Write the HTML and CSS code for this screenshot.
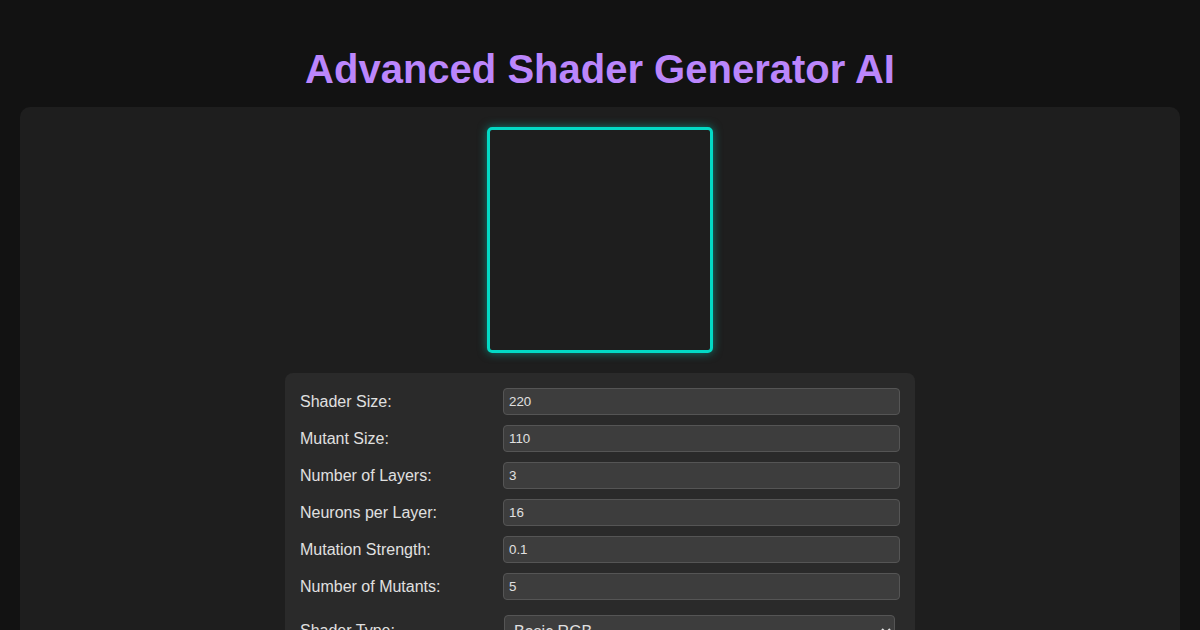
FILE: index.html
```html
<!DOCTYPE html>
<html>
<head>
<meta charset="utf-8">
<link rel="stylesheet" href="styles.css">
</head>
<body>
<h1 class="title">Advanced Shader Generator AI</h1>
<div class="container">
  <div class="canvas-wrap"><div class="canvas"></div></div>
  <div class="controls">
    <div class="row"><label>Shader Size:</label><input type="text" value="220"></div>
    <div class="row"><label>Mutant Size:</label><input type="text" value="110"></div>
    <div class="row"><label>Number of Layers:</label><input type="text" value="3"></div>
    <div class="row"><label>Neurons per Layer:</label><input type="text" value="16"></div>
    <div class="row"><label>Mutation Strength:</label><input type="text" value="0.1"></div>
    <div class="row"><label>Number of Mutants:</label><input type="text" value="5"></div>
    <div class="row row-select"><label>Shader Type:</label><select><option>Basic RGB</option></select></div>
  </div>
</div>
</body>
</html>
```
FILE: styles.css
```css
html, body {
  margin: 0;
  background: #121212;
}
body {
  padding: 20px;
  font-family: "Liberation Sans", Arial, sans-serif;
  color: #e0e0e0;
}
.title {
  margin: 27px 0 15px;
  text-align: center;
  font-size: 40px;
  font-weight: bold;
  color: #bb86fc;
}
.container {
  background: #1e1e1e;
  border-radius: 10px;
  padding: 20px;
  display: flex;
  flex-direction: column;
  align-items: center;
  gap: 20px;
}
.canvas-wrap {
  display: flex;
  justify-content: center;
}
.canvas {
  width: 220px;
  height: 220px;
  border: 3px solid #03dac6;
  border-radius: 5px;
  box-shadow: 0 0 10px rgba(3, 218, 198, 0.5);
}
.controls {
  width: 600px;
  background: #2a2a2a;
  border-radius: 8px;
  padding: 15px;
}
.row {
  display: grid;
  grid-template-columns: 203px 1fr;
  align-items: center;
  margin-bottom: 10px;
}
.row label {
  font-size: 16px;
  color: #e0e0e0;
}
.row input {
  box-sizing: border-box;
  width: 100%;
  height: 27px;
  padding: 5px;
  background: #3d3d3d;
  border: 1px solid #555;
  border-radius: 4px;
  color: #e0e0e0;
  font-family: "Liberation Sans", Arial, sans-serif;
  font-size: 13.33px;
}
.row-select {
  margin-top: 15px;
}
.row select {
  box-sizing: border-box;
  width: 391px;
  margin-left: 1px;
  height: 32px;
  padding: 4px 5px;
  background: #3d3d3d;
  border: 1px solid #555;
  border-radius: 4px;
  color: #e0e0e0;
  font-family: "Liberation Sans", Arial, sans-serif;
  font-size: 16px;
}
```
